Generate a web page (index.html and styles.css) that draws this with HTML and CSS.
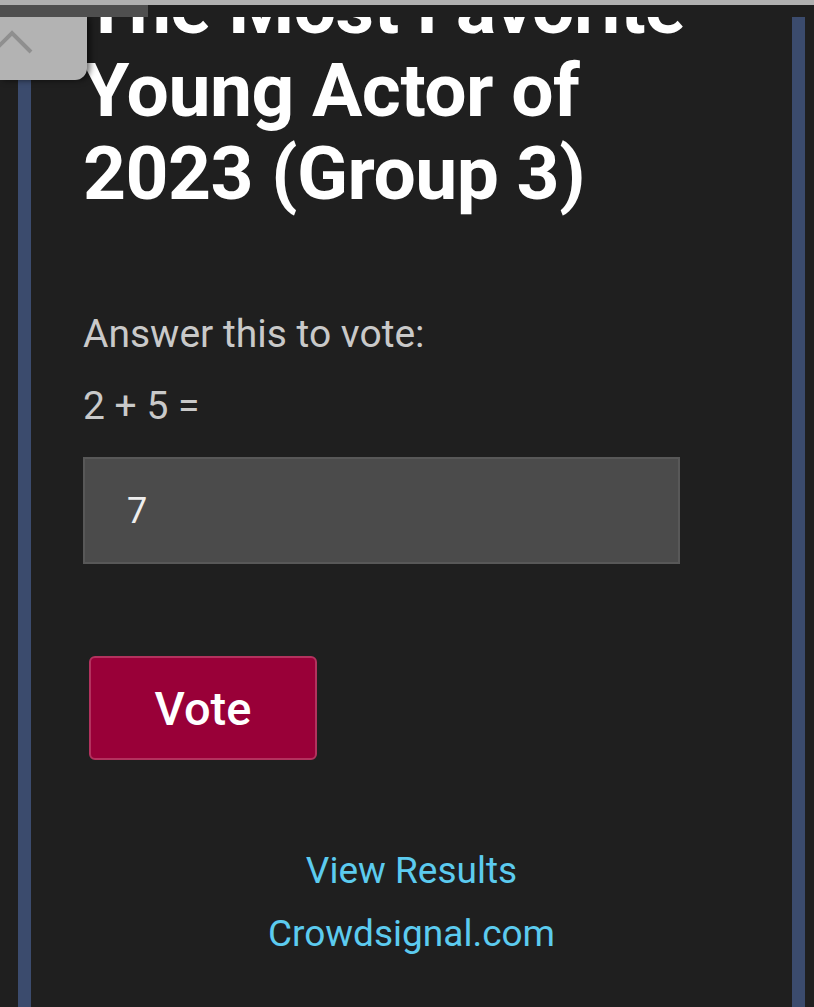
FILE: index.html
```html
<!DOCTYPE html>
<html lang="en">
<head>
    <meta charset="UTF-8">
    <meta name="viewport" content="width=device-width, initial-scale=1.0">
    <title>Poll</title>
    <link rel="stylesheet" href="styles.css">
</head>
<body>
    <div class="topbar">
        <div class="strip"></div>
        <div class="band"><div class="band-left"></div></div>
    </div>
    <div class="viewport">
        <div class="poll">
            <h1 class="poll-title">The Most Favorite Young Actor of 2023 (Group 3)</h1>
            <p class="prompt">Answer this to vote:</p>
            <p class="question">2 + 5 =</p>
            <input type="text" class="answer" value="7">
            <button class="vote">Vote</button>
            <div class="links">
                <a href="#">View Results</a>
                <a href="#">Crowdsignal.com</a>
            </div>
        </div>
    </div>
    <a class="back-top" href="#">
        <svg width="40" height="30" viewBox="0 0 40 30">
            <polyline points="-8,29 12,9 31,28" fill="none" stroke="#8f8f8f" stroke-width="4"/>
        </svg>
    </a>
</body>
</html>
```

FILE: styles.css
```css
* {
    margin: 0;
    padding: 0;
    box-sizing: border-box;
}

html, body {
    height: 100%;
}

body {
    display: flex;
    flex-direction: column;
    overflow: hidden;
    background-color: #1f1f1f;
    font-family: Roboto, "Liberation Sans", sans-serif;
    color: white;
}

.topbar {
    position: relative;
    z-index: 5;
    background-color: #1f1f1f;
}

.strip {
    height: 5px;
    background-color: #b0b0b0;
}

.band {
    height: 12px;
}

.band-left {
    width: 148px;
    height: 100%;
    background-color: #4f4f4f;
}

.viewport {
    flex: 1;
    overflow: hidden;
}

.poll {
    margin: -51px 9px 0 18px;
    padding: 0 0 200px 52px;
    border-left: 13px solid #3b4b6d;
    border-right: 13px solid #3b4b6d;
}

.poll-title {
    font-size: 75px;
    line-height: 83px;
    font-weight: 700;
    letter-spacing: -0.5px;
    padding-right: 40px;
}

.prompt, .question {
    font-size: 39px;
    color: #c9c9c9;
}

.prompt {
    margin-top: 96px;
}

.question {
    margin-top: 26px;
}

.answer {
    display: block;
    margin-top: 28px;
    width: 597px;
    height: 107px;
    padding-left: 42px;
    font-family: inherit;
    font-size: 36px;
    color: #eeeeee;
    background-color: #4b4b4b;
    border: 2px solid #585858;
    outline: none;
}

.vote {
    display: block;
    margin: 92px 0 0 6px;
    width: 228px;
    height: 104px;
    font-family: inherit;
    font-size: 47px;
    font-weight: 500;
    color: white;
    background-color: #990038;
    border: 2px solid #b3325e;
    border-radius: 6px;
}

.links {
    display: flex;
    flex-direction: column;
    align-items: center;
    gap: 20px;
    margin: 89px 0 0 -52px;
}

.links a {
    font-size: 37px;
    color: #5ccbef;
    text-decoration: none;
}

.back-top {
    position: absolute;
    left: 0;
    top: 17px;
    width: 87px;
    height: 63px;
    padding-top: 7px;
    background-color: #b3b3b3;
    border-bottom-right-radius: 12px;
    box-shadow: 3px 0 6px rgba(0, 0, 0, 0.6);
    z-index: 4;
}

.back-top svg {
    display: block;
}
```
